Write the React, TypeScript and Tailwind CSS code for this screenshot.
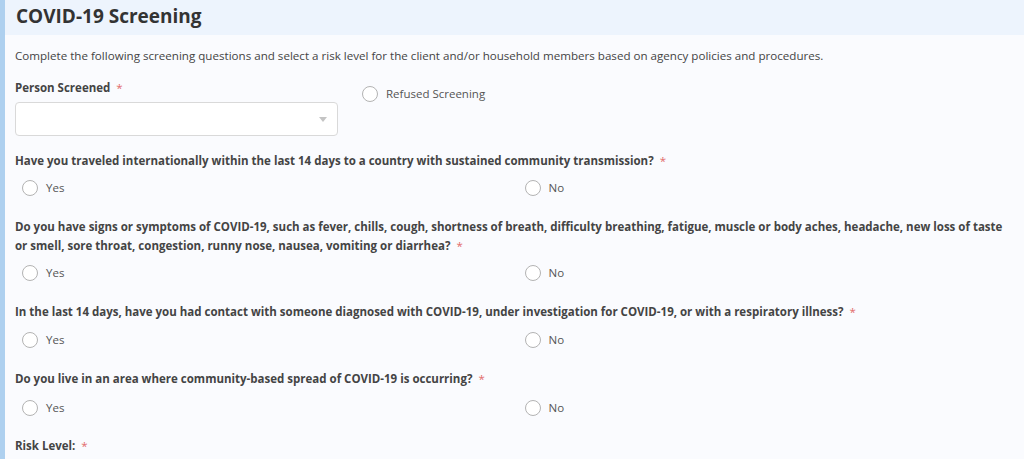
import React from 'react';

const font = { fontFamily: '"Open Sans", "Noto Sans", Arial, sans-serif' };

function Req() {
    return <span className="ml-[6px] text-[#e26a6a] font-normal">*</span>;
}

function Radio({ label }: { label: string }) {
    return (
        <label className="flex items-center gap-[8px] h-[16px] leading-[16px]">
            <span className="w-[16px] h-[16px] rounded-full border border-[#b3b3b3] bg-white shrink-0"></span>
            <span className="text-[11.5px] text-[#555]">{label}</span>
        </label>
    );
}

function Question({ text, gap }: { text: string; gap: string }) {
    return (
        <div className="mb-[21px]">
            <p className="text-[11.5px] leading-[19px] font-bold text-[#444]">
                {text}
                <Req />
            </p>
            <div className={`grid grid-cols-2 ${gap}`}>
                <div className="pl-[7px]"><Radio label="Yes" /></div>
                <div className="pl-[9px]"><Radio label="No" /></div>
            </div>
        </div>
    );
}

const questions = [
    {
        text: 'Have you traveled internationally within the last 14 days to a country with sustained community transmission?',
        gap: 'mt-[10px]',
    },
    {
        text: 'Do you have signs or symptoms of COVID-19, such as fever, chills, cough, shortness of breath, difficulty breathing, fatigue, muscle or body aches, headache, new loss of taste or smell, sore throat, congestion, runny nose, nausea, vomiting or diarrhea?',
        gap: 'mt-[10px]',
    },
    {
        text: 'In the last 14 days, have you had contact with someone diagnosed with COVID-19, under investigation for COVID-19, or with a respiratory illness?',
        gap: 'mt-[11px]',
    },
    {
        text: 'Do you live in an area where community-based spread of COVID-19 is occurring?',
        gap: 'mt-[12px]',
    },
];

export default function App() {
    return (
        <div className="w-[1024px] h-[459px] overflow-hidden flex bg-[#fafbfe]" style={font}>
            {/* Left accent bar */}
            <div className="w-[5px] bg-[#aed0ef] shrink-0"></div>

            <div className="flex-1 flex flex-col">
                {/* Header */}
                <div className="h-[35px] bg-[#edf4fd] flex items-center pl-[11px] pb-[2px]">
                    <h1 className="text-[19px] font-bold text-[#333] leading-none">COVID-19 Screening</h1>
                </div>

                <div className="pl-[10px] pr-[8px] pt-[11px]">
                    <p className="text-[11.6px] leading-[19px] text-[#444]">
                        Complete the following screening questions and select a risk level for the client and/or household members based on agency policies and procedures.
                    </p>

                    {/* Person screened */}
                    <div className="flex mt-[13px]">
                        <div className="w-[323px]">
                            <p className="text-[11.5px] leading-[19px] font-bold text-[#444]">
                                Person Screened
                                <Req />
                            </p>
                            <div className="mt-[5px] h-[34px] bg-white border border-[#d9d9d9] rounded-[4px] flex items-center justify-end pr-[10px]">
                                <span className="w-0 h-0 border-l-[4px] border-r-[4px] border-t-[5px] border-l-transparent border-r-transparent border-t-[#c4c4c4]"></span>
                            </div>
                        </div>
                        <div className="pl-[24px] pt-[8px]">
                            <Radio label="Refused Screening" />
                        </div>
                    </div>

                    <div className="mt-[15px]">
                        {questions.map((q) => (
                            <Question key={q.text} text={q.text} gap={q.gap} />
                        ))}
                    </div>

                    <p className="text-[11.5px] leading-[19px] font-bold text-[#444] -mt-[1px]">
                        Risk Level:
                        <Req />
                    </p>
                </div>
            </div>
        </div>
    );
}
